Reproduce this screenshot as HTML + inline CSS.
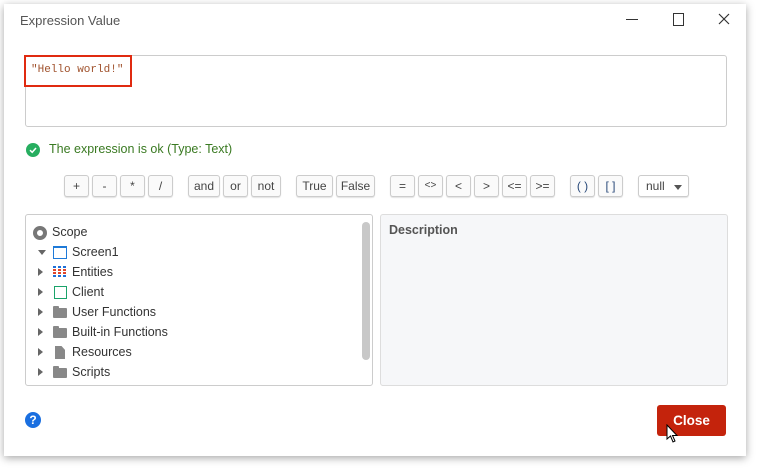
<!DOCTYPE html>
<html><head><style>
body{margin:0;width:761px;height:471px;background:#fff;position:relative;font-family:"Liberation Sans",sans-serif;overflow:hidden}
.dlg{position:absolute;left:4px;top:4px;width:742px;height:452px;background:#fff;box-shadow:0 2px 8px rgba(0,0,0,.35)}
.a{position:absolute}
.b{position:absolute;top:175px;height:20px;border:1px solid #ccc;border-radius:3px;background:#fafafa;box-shadow:0 1px 1px rgba(0,0,0,.12);font-size:12px;color:#444;text-align:center;line-height:20px;box-sizing:content-box}
.row{position:absolute;left:38px;font-size:12.5px;color:#333;height:20px;line-height:20px}
.tri{position:absolute;left:0;top:6px;width:0;height:0;border-top:4px solid transparent;border-bottom:4px solid transparent;border-left:5px solid #666}
.fold{position:absolute;left:15px;top:6px;width:14px;height:10px;background:#888;border-radius:1px}
.fold:before{content:"";position:absolute;left:0;top:-2px;width:6px;height:3px;background:#888;border-radius:1px 1px 0 0}
.lbl{position:absolute;left:34px;white-space:nowrap}
</style></head><body>
<div class="dlg"></div>
<div class="a" style="left:20px;top:13px;font-size:13px;color:#555">Expression Value</div>
<div class="a" style="left:626px;top:19px;width:12px;height:1px;background:#333"></div>
<div class="a" style="left:673px;top:13px;width:9px;height:11px;border:1px solid #333"></div>
<svg class="a" style="left:718px;top:13px" width="12" height="12"><path d="M1 1L11 11M11 1L1 11" stroke="#333" stroke-width="1.2"/></svg>
<div class="a" style="left:25px;top:55px;width:700px;height:70px;border:1px solid #ccc;border-radius:3px"></div>
<div class="a" style="left:24px;top:55px;width:108px;height:32px;border:2px solid #e02a10;box-sizing:border-box"></div>
<div class="a" style="left:31px;top:64px;font-family:'Liberation Mono',monospace;font-size:11px;color:#a0522d">"Hello world!"</div>
<div class="a" style="left:26px;top:143px;width:14px;height:14px;border-radius:50%;background:#27ae60"></div>
<svg class="a" style="left:26px;top:143px" width="14" height="14"><path d="M4 7.2L6.2 9.3L10 5" stroke="#fff" stroke-width="1.5" fill="none"/></svg>
<div class="a" style="left:49px;top:142px;font-size:12.5px;color:#3a7a22">The expression is ok (Type: Text)</div>
<div class="b" style="left:64px;width:23px">+</div>
<div class="b" style="left:92px;width:23px">-</div>
<div class="b" style="left:120px;width:23px">*</div>
<div class="b" style="left:148px;width:23px">/</div>
<div class="b" style="left:188px;width:30px">and</div>
<div class="b" style="left:223px;width:23px">or</div>
<div class="b" style="left:251px;width:28px">not</div>
<div class="b" style="left:296px;width:35px">True</div>
<div class="b" style="left:336px;width:37px">False</div>
<div class="b" style="left:390px;width:23px">=</div>
<div class="b" style="left:418px;width:23px;font-size:10px">&lt;&gt;</div>
<div class="b" style="left:446px;width:23px">&lt;</div>
<div class="b" style="left:474px;width:23px">&gt;</div>
<div class="b" style="left:502px;width:23px">&lt;=</div>
<div class="b" style="left:530px;width:23px">&gt;=</div>
<div class="b" style="left:570px;width:23px;color:#2a4a7a">( )</div>
<div class="b" style="left:598px;width:23px;color:#2a4a7a">[ ]</div>
<div class="b" style="left:638px;width:49px;background:#fff;text-align:left;text-indent:7px">null<span style="position:absolute;right:6px;top:9px;border-left:4px solid transparent;border-right:4px solid transparent;border-top:5px solid #555;width:0;height:0"></span></div>
<div class="a" style="left:25px;top:214px;width:346px;height:170px;border:1px solid #ccc;border-radius:3px"></div>
<div class="a" style="left:362px;top:222px;width:8px;height:138px;background:#c8c8c8;border-radius:4px"></div>
<div class="a" style="left:33px;top:226px;width:6px;height:6px;border:4px solid #777;border-radius:50%;background:#fff"></div>
<div class="a" style="left:52px;top:225px;font-size:12.5px;color:#333">Scope</div>
<div class="row" style="top:242px"><div style="position:absolute;left:0;top:8px;border-left:4px solid transparent;border-right:4px solid transparent;border-top:5px solid #666"></div><div style="position:absolute;left:15px;top:4px;width:12px;height:10px;border:1px solid #1e7ad8;border-top-width:2px"></div><span class="lbl">Screen1</span></div>
<div class="row" style="top:262px"><div class="tri"></div><svg style="position:absolute;left:15px;top:4px" width="14" height="11"><g fill="#1e6fd8"><rect x="0" y="0" width="3" height="2"/><rect x="5" y="0" width="3" height="2"/><rect x="10" y="0" width="3" height="2"/></g><g fill="#e0452a"><rect x="0" y="3" width="3" height="2"/><rect x="5" y="3" width="3" height="2"/><rect x="10" y="3" width="3" height="2"/><rect x="0" y="6" width="3" height="2"/><rect x="5" y="6" width="3" height="2"/><rect x="10" y="6" width="3" height="2"/></g><g fill="#1e6fd8"><rect x="0" y="9" width="3" height="2"/><rect x="5" y="9" width="3" height="2"/><rect x="10" y="9" width="3" height="2"/></g></svg><span class="lbl">Entities</span></div>
<div class="row" style="top:282px"><div class="tri"></div><div style="position:absolute;left:16px;top:4px;width:11px;height:11px;border:1px solid #1aa36a"></div><span class="lbl">Client</span></div>
<div class="row" style="top:302px"><div class="tri"></div><div class="fold"></div><span class="lbl">User Functions</span></div>
<div class="row" style="top:322px"><div class="tri"></div><div class="fold"></div><span class="lbl">Built-in Functions</span></div>
<div class="row" style="top:342px"><div class="tri"></div><div style="position:absolute;left:17px;top:4px;width:10px;height:13px;background:#888;clip-path:polygon(0 0,65% 0,100% 30%,100% 100%,0 100%)"></div><span class="lbl">Resources</span></div>
<div class="row" style="top:362px"><div class="tri"></div><div class="fold"></div><span class="lbl">Scripts</span></div>
<div class="a" style="left:380px;top:214px;width:346px;height:170px;border:1px solid #ddd;border-radius:3px;background:#f6f7f9"></div>
<div class="a" style="left:389px;top:223px;font-size:12.5px;font-weight:bold;color:#555">Description</div>
<div class="a" style="left:25px;top:412px;width:16px;height:16px;border-radius:50%;background:#1a6fe0;color:#fff;font-size:12px;font-weight:bold;text-align:center;line-height:16px">?</div>
<div class="a" style="left:657px;top:405px;width:69px;height:31px;background:#c4230c;border-radius:3px;color:#fff;font-size:13.5px;font-weight:bold;text-align:center;line-height:31px">Close</div>
<svg class="a" style="left:666px;top:424px" width="14" height="20"><path d="M1 1L1 15L4.5 12L7 18L9 17L6.5 11.5L11 11.5Z" fill="#fff" stroke="#000" stroke-width="1"/></svg>
</body></html>
